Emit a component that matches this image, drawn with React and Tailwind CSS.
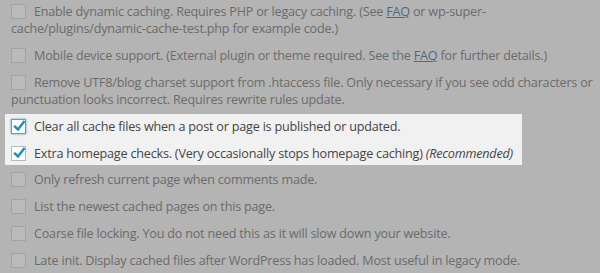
const dimRows = [
  {
    key: "dynamic",
    text: (
      <>
        Enable dynamic caching. Requires PHP or legacy caching. (See{" "}
        <a className="text-[#4d6a84] underline">FAQ</a> or wp-super-
        <br />
        cache/plugins/dynamic-cache-test.php for example code.)
      </>
    ),
  },
  {
    key: "mobile",
    text: (
      <>
        Mobile device support. (External plugin or theme required. See the{" "}
        <a className="text-[#4d6a84] underline">FAQ</a> for further details.)
      </>
    ),
  },
  {
    key: "utf8",
    text: (
      <>
        Remove UTF8/blog charset support from .htaccess file. Only necessary if you see odd characters or
        <br />
        punctuation looks incorrect. Requires rewrite rules update.
      </>
    ),
  },
];

const lowerRows = [
  "Only refresh current page when comments made.",
  "List the newest cached pages on this page.",
  "Coarse file locking. You do not need this as it will slow down your website.",
  "Late init. Display cached files after WordPress has loaded. Most useful in legacy mode.",
];

function DimBox() {
  return (
    <span className="inline-block align-[-3px] w-[15px] h-[15px] mr-[8px] border border-[#a3a3a3] bg-[#bababa]" />
  );
}

function CheckedBox({ focused }) {
  return (
    <span
      className={
        "relative inline-block align-[-3px] w-[15px] h-[15px] mr-[8px] bg-white border " +
        (focused ? "border-[#5b9dd9] shadow-[0_0_2px_rgba(30,140,190,0.8)]" : "border-[#b4b9be]")
      }
    >
      <svg
        viewBox="0 0 16 16"
        className="absolute left-[0px] top-[-1px] w-[15px] h-[15px]"
      >
        <path
          d="M3.2 8.2 L6.4 11.2 L12.6 3.2"
          fill="none"
          stroke="#1e8cbe"
          strokeWidth="2.6"
          strokeLinecap="square"
        />
      </svg>
    </span>
  );
}

export default function App() {
  return (
    <div
      className="w-[600px] h-[273px] overflow-hidden bg-[#b4b4b4] text-[12.6px] tracking-[-0.2px] leading-[17px] text-[#6b6b6b] pt-[3px]"
      style={{ fontFamily: '"Open Sans", "Noto Sans", sans-serif' }}
    >
      <div className="flex flex-col">
        {dimRows.map((row, i) => (
          <p
            key={row.key}
            className={"pl-[11px] whitespace-nowrap " + (i === dimRows.length - 1 ? "mb-[6px]" : "mb-[10px]")}
          >
            <DimBox />
            {row.text}
          </p>
        ))}

        <div className="ml-[5px] w-[517px] bg-[#f1f1f1] pl-[6px] pt-[4px] pb-[3px] text-[#444]">
          <p className="mb-[10px] whitespace-nowrap">
            <CheckedBox focused />
            Clear all cache files when a post or page is published or updated.
          </p>
          <p className="whitespace-nowrap">
            <CheckedBox />
            Extra homepage checks. (Very occasionally stops homepage caching){" "}
            <em>(Recommended)</em>
          </p>
        </div>

        <div className="mt-[6px] flex flex-col gap-[10px]">
          {lowerRows.map((t) => (
            <p key={t} className="pl-[11px] whitespace-nowrap">
              <DimBox />
              {t}
            </p>
          ))}
        </div>
      </div>
    </div>
  );
}
